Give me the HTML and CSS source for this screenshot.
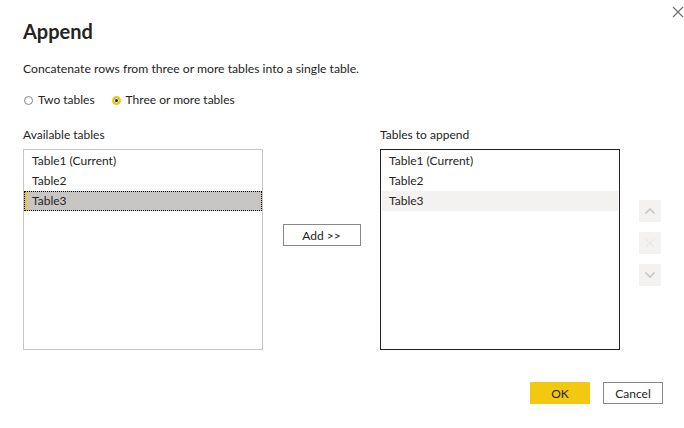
FILE: index.html
```html
<!DOCTYPE html>
<html lang="en">
<head>
    <meta charset="UTF-8">
    <title>Append</title>
    <link rel="stylesheet" href="styles.css">
</head>
<body>
    <div class="dialog">
        <!-- Fechar -->
        <button class="close" aria-label="Close">
            <svg width="12" height="12" viewBox="0 0 12 12"><path d="M1 1L11 11M11 1L1 11" stroke="#6f6f6f" stroke-width="1.2"/></svg>
        </button>

        <h1 class="title">Append</h1>
        <p class="desc">Concatenate rows from three or more tables into a single table.</p>

        <div class="radios">
            <label class="radio"><span class="dot"></span>Two tables</label>
            <label class="radio checked"><span class="dot"></span>Three or more tables</label>
        </div>

        <div class="lists">
            <div class="col">
                <p class="label">Available tables</p>
                <ul class="list list-left">
                    <li>Table1 (Current)</li>
                    <li>Table2</li>
                    <li class="focused">Table3</li>
                </ul>
            </div>

            <div class="middle">
                <button class="btn btn-add">Add &gt;&gt;</button>
            </div>

            <div class="col">
                <p class="label">Tables to append</p>
                <ul class="list list-right">
                    <li>Table1 (Current)</li>
                    <li>Table2</li>
                    <li class="hover">Table3</li>
                </ul>
            </div>

            <div class="arrows">
                <span class="arrow">
                    <svg width="12" height="8" viewBox="0 0 12 8"><path d="M1.5 6.5L6 2L10.5 6.5" fill="none" stroke="#c8c6c4" stroke-width="1.6"/></svg>
                </span>
                <span class="arrow">
                    <svg width="10" height="10" viewBox="0 0 10 10"><path d="M1 1L9 9M9 1L1 9" stroke="#ebe9e7" stroke-width="1.2"/></svg>
                </span>
                <span class="arrow">
                    <svg width="12" height="8" viewBox="0 0 12 8"><path d="M1.5 1.5L6 6L10.5 1.5" fill="none" stroke="#c8c6c4" stroke-width="1.6"/></svg>
                </span>
            </div>
        </div>

        <div class="footer">
            <button class="btn btn-ok">OK</button>
            <button class="btn btn-cancel">Cancel</button>
        </div>
    </div>
</body>
</html>
```

FILE: styles.css
```css
body {
    margin: 0;
    background-color: #fff;
    font-family: "Segoe UI", Lato, "Open Sans", Arial, sans-serif;
    color: #252423;
}

.dialog {
    position: relative;
    width: 684px;
    height: 428px;
    box-sizing: border-box;
    padding: 0 21px 0 23px;
}

.close {
    position: absolute;
    top: 5px;
    right: -1px;
    width: 14px;
    height: 14px;
    padding: 1px;
    border: none;
    background: none;
}

.title {
    margin: 0;
    padding-top: 17px;
    font-size: 20px;
    font-weight: 700;
    line-height: 28px;
}

.desc {
    margin: 15px 0 0;
    font-size: 12.2px;
    line-height: 18px;
}

.radios {
    display: flex;
    gap: 16px;
    margin-top: 14px;
    font-size: 12px;
    line-height: 16px;
}

.radio {
    display: flex;
    align-items: center;
}

.dot {
    width: 7px;
    height: 7px;
    margin: 0 5px 0 1px;
    border: 1px solid #8a8886;
    border-radius: 50%;
}

.checked .dot {
    width: 5px;
    height: 5px;
    border: 2px solid #f2c811;
    background-color: #252423;
    box-shadow: inset 0 0 0 1px #fff;
}

.lists {
    display: flex;
    margin-top: 19px;
}

.col {
    width: 240px;
}

.label {
    margin: 0 0 6px;
    font-size: 12px;
    line-height: 16px;
}

.list {
    list-style: none;
    margin: 0;
    height: 197px;
    font-size: 12px;
}

.list-left {
    padding: 1px 0;
    border: 1px solid #c8c6c4;
}

.list-right {
    padding: 1px;
    border: 1px solid #252423;
}

.list li {
    padding-left: 8px;
    line-height: 20px;
}

.list-left .focused {
    background-color: #c8c6c4;
    outline: 1px dotted #000;
    outline-offset: -1px;
    box-shadow: inset 3px 0 0 #f2c811;
}

.list-right li {
    padding-left: 7px;
}

.list-right .hover {
    background-color: #f3f2f1;
}

.middle {
    width: 117px;
    padding-top: 97px;
    display: flex;
    justify-content: center;
    align-items: flex-start;
}

.btn {
    font-family: inherit;
    font-size: 12px;
    color: #252423;
    cursor: pointer;
}

.btn-add {
    width: 78px;
    height: 22px;
    padding: 0;
    background-color: #fff;
    border: 1px solid #8a8886;
}

.arrows {
    display: flex;
    flex-direction: column;
    gap: 10px;
    padding: 73px 0 0 19px;
}

.arrow {
    display: flex;
    justify-content: center;
    align-items: center;
    width: 22px;
    height: 22px;
    background-color: #f3f2f1;
}

.footer {
    display: flex;
    justify-content: flex-end;
    gap: 13px;
    margin-top: 32px;
}

.btn-ok {
    width: 60px;
    height: 22px;
    border: none;
    background-color: #f2c811;
}

.btn-cancel {
    width: 60px;
    height: 22px;
    background-color: #fff;
    border: 1px solid #8a8886;
}
```
